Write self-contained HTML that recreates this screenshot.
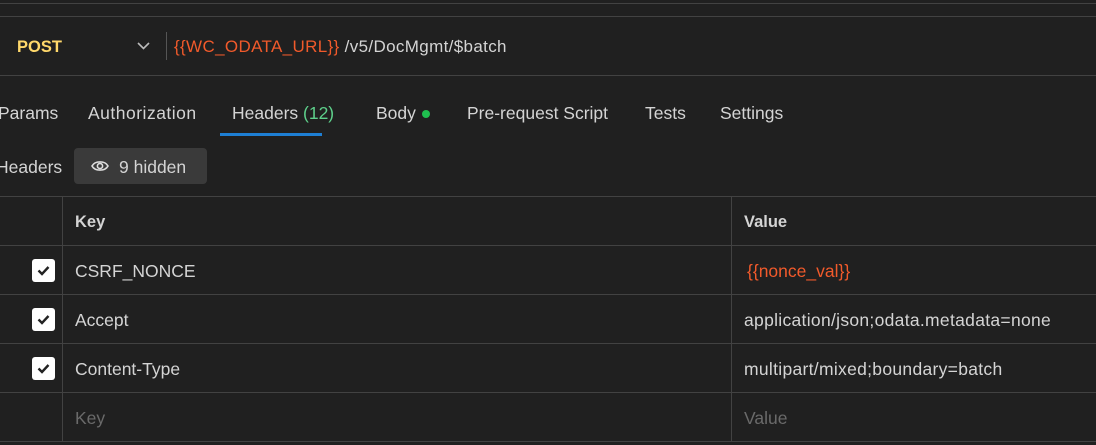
<!DOCTYPE html>
<html><head><style>
body{margin:0;width:1096px;height:445px;background:#202020;position:relative;overflow:hidden;font-family:"Liberation Sans",sans-serif;color:#d4d4d4;font-size:17.5px}
.h{position:absolute;left:0;width:1096px;height:1px;background:#424242}
.v{position:absolute;width:1px;background:#424242}
.t{position:absolute;white-space:nowrap;line-height:20px}
.cb{position:absolute;left:32px;width:23px;height:23px;background:#fff;border-radius:3px}
.cb svg{position:absolute;left:5px;top:6px}
</style></head><body>
<div class="h" style="top:3px"></div>
<div class="h" style="top:16px"></div>
<div class="h" style="top:75px"></div>
<div class="t" style="left:17px;top:37px;color:#ffd86b;font-weight:bold;font-size:16.5px">POST</div>
<svg style="position:absolute;left:137px;top:42px" width="13" height="8"><path d="M1 1L6.5 6.5L12 1" stroke="#bbb" stroke-width="1.6" fill="none"/></svg>
<div class="v" style="left:166px;top:32px;height:28px;background:#555"></div>
<div class="t" style="left:174px;top:37px;font-size:17px;letter-spacing:0.35px"><span style="color:#f15a2b">{{WC_ODATA_URL}}</span> /v5/DocMgmt/$batch</div>
<div class="t" style="left:-2px;top:103px">Params</div>
<div class="t" style="left:88px;top:103px;letter-spacing:0.5px">Authorization</div>
<div class="t" style="left:232px;top:103px">Headers <span style="color:#5ed08b">(12)</span></div>
<div style="position:absolute;left:220px;top:133px;width:102px;height:3px;background:#1e7fd4"></div>
<div class="t" style="left:376px;top:103px">Body</div>
<div style="position:absolute;left:422px;top:110px;width:8px;height:8px;border-radius:50%;background:#1fbf4f"></div>
<div class="t" style="left:467px;top:103px">Pre-request Script</div>
<div class="t" style="left:645px;top:103px">Tests</div>
<div class="t" style="left:720px;top:103px">Settings</div>
<div class="t" style="left:-4px;top:157px">Headers</div>
<div style="position:absolute;left:74px;top:148px;width:133px;height:36px;background:#3a3a3a;border-radius:4px"></div>
<svg style="position:absolute;left:91px;top:159px" width="18" height="14" viewBox="0 0 18 14"><path d="M1 7C4 1.5 14 1.5 17 7C14 12.5 4 12.5 1 7Z" stroke="#ddd" stroke-width="1.6" fill="none"/><circle cx="9" cy="7" r="2.6" stroke="#ddd" stroke-width="1.6" fill="none"/></svg>
<div class="t" style="left:119px;top:157px">9 hidden</div>
<div class="h" style="top:196px"></div>
<div class="h" style="top:245px"></div>
<div class="h" style="top:294px"></div>
<div class="h" style="top:343px"></div>
<div class="h" style="top:392px"></div>
<div class="h" style="top:441px"></div>
<div class="v" style="left:62px;top:196px;height:245px"></div>
<div class="v" style="left:731px;top:196px;height:245px"></div>
<div class="t" style="left:75px;top:212px;font-weight:bold;font-size:16.5px">Key</div>
<div class="t" style="left:744px;top:212px;font-weight:bold;font-size:16.5px">Value</div>
<div class="cb" style="top:259px"><svg width="13" height="11"><path d="M1.5 5.5L5 9L11.5 2" stroke="#222" stroke-width="2.4" fill="none"/></svg></div>
<div class="cb" style="top:308px"><svg width="13" height="11"><path d="M1.5 5.5L5 9L11.5 2" stroke="#222" stroke-width="2.4" fill="none"/></svg></div>
<div class="cb" style="top:357px"><svg width="13" height="11"><path d="M1.5 5.5L5 9L11.5 2" stroke="#222" stroke-width="2.4" fill="none"/></svg></div>
<div class="t" style="left:75px;top:261px">CSRF_NONCE</div>
<div class="t" style="left:747px;top:261px;color:#f15a2b">{{nonce_val}}</div>
<div class="t" style="left:75px;top:310px">Accept</div>
<div class="t" style="left:744px;top:310px;letter-spacing:0.3px">application/json;odata.metadata=none</div>
<div class="t" style="left:75px;top:359px">Content-Type</div>
<div class="t" style="left:744px;top:359px;letter-spacing:0.3px">multipart/mixed;boundary=batch</div>
<div class="t" style="left:75px;top:408px;color:#6a6a6a">Key</div>
<div class="t" style="left:744px;top:408px;color:#6a6a6a">Value</div>
</body></html>
